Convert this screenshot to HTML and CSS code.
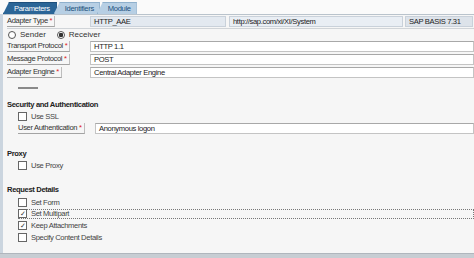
FILE: index.html
```html
<!DOCTYPE html>
<html lang="en">

<head>
    <meta charset="UTF-8">
    <title>Adapter Parameters</title>
    <link rel="stylesheet" href="styles.css">
</head>

<body>
    <nav class="tabs">
        <span class="tab active">Parameters</span>
        <span class="tab">Identifiers</span>
        <span class="tab">Module</span>
    </nav>

    <main class="panel">
        <div class="row type-row">
            <div class="label-cell"><span class="label">Adapter Type <i>*</i></span></div>
            <span class="field ro">HTTP_AAE</span>
            <span class="field ro ns">http://sap.com/xi/XI/System</span>
            <span class="field ro ver">SAP BASIS 7.31</span>
        </div>
        <div class="row radios">
            <span class="radio"></span>Sender
            <span class="radio on"></span>Receiver
        </div>
        <div class="row">
            <div class="label-cell"><span class="label">Transport Protocol <i>*</i></span></div>
            <span class="field">HTTP 1.1</span>
        </div>
        <div class="row">
            <div class="label-cell"><span class="label">Message Protocol <i>*</i></span></div>
            <span class="field">POST</span>
        </div>
        <div class="row">
            <div class="label-cell"><span class="label">Adapter Engine <i>*</i></span></div>
            <span class="field">Central Adapter Engine</span>
        </div>
        <div class="stub"></div>

        <h2>Security and Authentication</h2>
        <div class="check-row"><span class="box"></span>Use SSL</div>
        <div class="row auth-row">
            <div class="label-cell"><span class="label">User Authentication <i>*</i></span></div>
            <span class="field">Anonymous logon</span>
        </div>

        <h2 class="proxy">Proxy</h2>
        <div class="check-row"><span class="box"></span>Use Proxy</div>

        <h2 class="request">Request Details</h2>
        <div class="check-row"><span class="box"></span>Set Form</div>
        <div class="check-row"><span class="focus"><span class="box checked">&#10003;</span>Set Multipart</span></div>
        <div class="check-row"><span class="box checked">&#10003;</span>Keep Attachments</div>
        <div class="check-row"><span class="box"></span>Specify Content Details</div>
    </main>
    <div class="bottom-bar"></div>
</body>

</html>
```

FILE: styles.css
```css
html,
body {
    margin: 0;
    padding: 0;
}

* {
    box-sizing: border-box;
}

body {
    width: 474px;
    height: 258px;
    overflow: hidden;
    background-color: #f6f6f6;
    color: #222;
    font-family: "Liberation Sans", Arial, sans-serif;
    font-size: 7.6px;
    letter-spacing: -0.35px;
}

/* tab strip */
.tabs {
    display: flex;
    align-items: flex-end;
    height: 15px;
    padding-left: 3px;
    background-color: #fafafa;
    border-bottom: 1px solid #b9c3cc;
}

.tab {
    height: 12px;
    padding: 0 5px 0 10px;
    margin-right: -3px;
    line-height: 12px;
    color: #1d4f7c;
    background-color: #b7cfe4;
    border: 1px solid #8fb0cc;
    border-bottom: none;
    clip-path: polygon(6px 0, 100% 0, 100% 100%, 0 100%);
}

.tab.active {
    padding-right: 6px;
    color: #fff;
    background-color: #2b6597;
    border-color: #1d4f7c;
}

.panel {
    height: 239px;
    padding: 1px 0 0 4px;
    border-left: 3px solid #cbd5df;
    margin-top: -1px;
}

/* form rows */
.row {
    display: flex;
    align-items: center;
    height: 13px;
}

.label-cell {
    width: 83px;
    flex: none;
}

.label {
    display: inline-block;
    line-height: 10px;
    white-space: nowrap;
    color: #333;
    border-bottom: 1px solid #a3a3a3;
    border-right: 1px solid #bdbdbd;
    padding-right: 2px;
}

.label i {
    color: #d22;
    font-style: normal;
}

.field {
    flex: 1;
    height: 11px;
    line-height: 10px;
    padding-left: 3px;
    background-color: #fff;
    border: 1px solid #c4c4c4;
    border-top-color: #a8a8a8;
    white-space: nowrap;
}

.type-row {
    height: 14px;
    border-bottom: 1px solid #d0d4d8;
}

.type-row .field {
    flex: none;
    width: 136px;
    background-color: #e3e9f0;
    border-color: #c9d1da;
}

.type-row .ns {
    width: 174px;
    margin-left: 3px;
    background-color: #e9eef4;
}

.type-row .ver {
    width: 68px;
    margin-left: 2px;
    background-color: #dde3ea;
}

.radios {
    height: 11px;
    padding-left: 1px;
    color: #333;
    font-size: 8px;
    letter-spacing: 0;
}

.radio {
    width: 8px;
    height: 8px;
    margin-right: 4px;
    border: 1px solid #555;
    border-radius: 50%;
    background-color: #fff;
}

.radio.on {
    margin-left: 11px;
    background: radial-gradient(circle, #333 0 2px, #fff 2.5px);
}

.stub {
    width: 20px;
    height: 2px;
    margin: 8px 0 0 11px;
    background-color: #8a8a8a;
}

h2 {
    margin: 10px 0 0 0;
    height: 11px;
    font-size: 7.6px;
    line-height: 11px;
    color: #222;
}

h2.proxy {
    margin-top: 14px;
}

h2.request {
    margin-top: 13px;
}

/* checkboxes */
.check-row {
    display: flex;
    align-items: center;
    height: 11.7px;
    padding-left: 11px;
    color: #444;
}

h2 + .check-row {
    margin-top: 1px;
}

.box {
    width: 9px;
    height: 9px;
    margin-right: 4px;
    border: 1px solid #666;
    background-color: #fff;
    font-size: 7px;
    line-height: 7px;
    text-align: center;
    letter-spacing: 0;
    color: #333;
}

.focus {
    display: flex;
    align-items: center;
    flex: 1;
    height: 10px;
    border: 1px dotted #777;
    border-left: none;
}

.auth-row {
    height: 11px;
}

.auth-row .label-cell {
    width: 77px;
    margin-left: 11px;
}

.bottom-bar {
    height: 5px;
    background-color: #c7cdd3;
    border-top: 1px solid #b0b6bd;
}
```
